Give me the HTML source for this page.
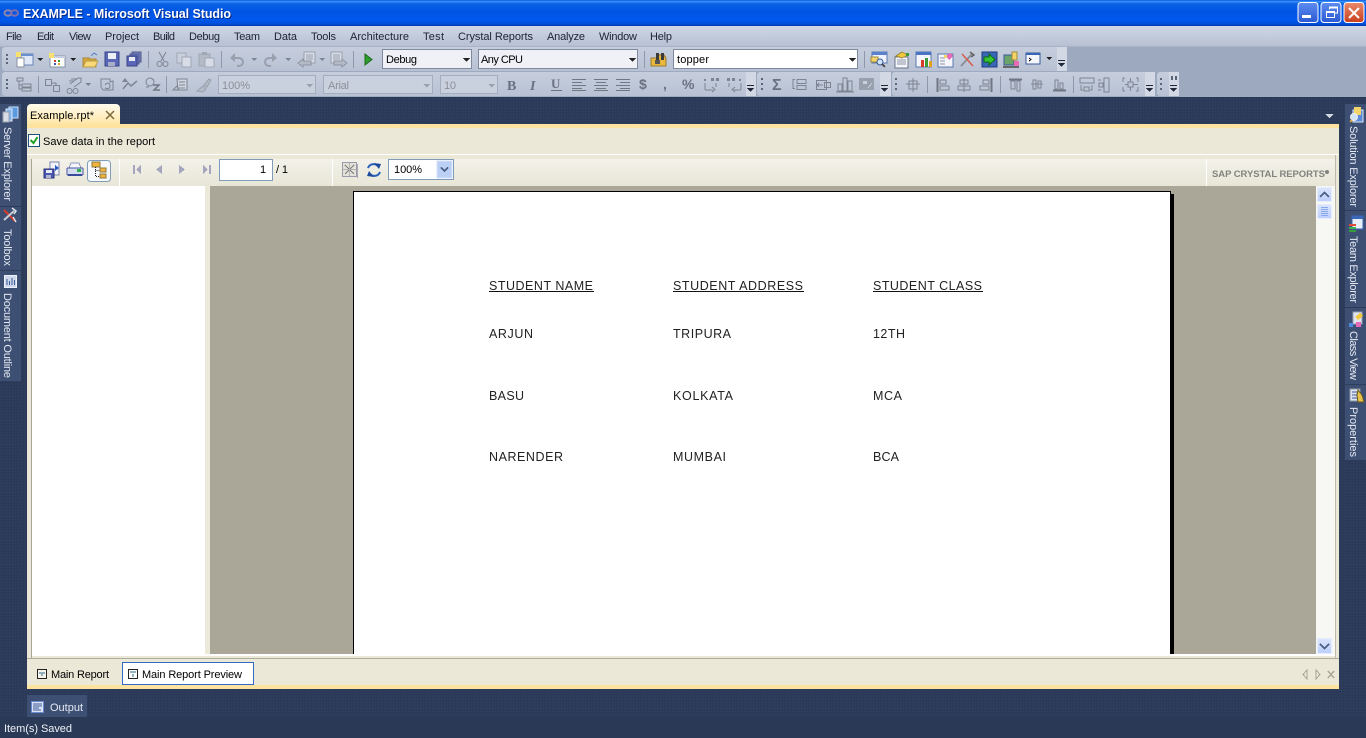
<!DOCTYPE html>
<html lang="en"><head><meta charset="utf-8"><title>EXAMPLE - Microsoft Visual Studio</title>
<style>
html,body{margin:0;padding:0;background:#2a3a56;overflow:hidden;width:1366px;height:738px}
svg{display:block}
text{font-family:"Liberation Sans",sans-serif;font-size:11px;fill:#000}
.m{fill:#1c2333}
.r{font-size:12.5px;fill:#222}
.s{fill:#e6eaf2}
.g{fill:#8b8f98}
.i{fill:none;stroke:#7d8592;stroke-width:1}
.f{fill:#7d8592}
</style></head><body>
<svg width="1366" height="738" viewBox="0 0 1366 738" xmlns="http://www.w3.org/2000/svg" shape-rendering="crispEdges">
<defs>
<pattern id="dith" width="3" height="3" patternUnits="userSpaceOnUse"><rect width="3" height="3" fill="#2b3b59"/><rect x="0" y="0" width="1" height="1" fill="#31415f"/><rect x="2" y="1" width="1" height="1" fill="#283753"/></pattern>
<linearGradient id="tb" x1="0" y1="0" x2="0" y2="1">
<stop offset="0" stop-color="#0a5ad8"/><stop offset=".06" stop-color="#3a93ff"/><stop offset=".14" stop-color="#0c62e6"/><stop offset=".45" stop-color="#0054e3"/><stop offset=".75" stop-color="#0058ee"/><stop offset=".9" stop-color="#0050dc"/><stop offset="1" stop-color="#003cb4"/></linearGradient>
<linearGradient id="mn" x1="0" y1="0" x2="0" y2="1"><stop offset="0" stop-color="#cfd7e5"/><stop offset="1" stop-color="#b7c1d3"/></linearGradient>
<linearGradient id="tool" x1="0" y1="0" x2="0" y2="1"><stop offset="0" stop-color="#c6cedd"/><stop offset="1" stop-color="#b8c2d4"/></linearGradient>
<linearGradient id="tab" x1="0" y1="0" x2="0" y2="1"><stop offset="0" stop-color="#fffbee"/><stop offset="1" stop-color="#fee6a6"/></linearGradient>
<linearGradient id="vt" x1="0" y1="0" x2="0" y2="1"><stop offset="0" stop-color="#f3f2ea"/><stop offset="1" stop-color="#e8e6d7"/></linearGradient>
<linearGradient id="btn" x1="0" y1="0" x2="0" y2="1"><stop offset="0" stop-color="#5d8cf0"/><stop offset="1" stop-color="#2b59d4"/></linearGradient>
<linearGradient id="cls" x1="0" y1="0" x2="0" y2="1"><stop offset="0" stop-color="#e98a6c"/><stop offset="1" stop-color="#c93f1c"/></linearGradient>
<linearGradient id="sb" x1="0" y1="0" x2="0" y2="1"><stop offset="0" stop-color="#dbe5fd"/><stop offset="1" stop-color="#bccffb"/></linearGradient>
</defs>

<!-- base -->
<rect width="1366" height="738" fill="#2a3a56"/>
<rect y="97" width="1366" height="620" fill="url(#dith)"/>

<!-- title bar -->
<rect width="1366" height="26" fill="url(#tb)"/>
<g fill="none" stroke="#8d86ad" stroke-width="2" shape-rendering="auto"><ellipse cx="8" cy="13" rx="3.5" ry="2.7"/><ellipse cx="14.5" cy="13" rx="3.5" ry="2.7" stroke="#7b6fb0"/></g>
<text x="24" y="19" textLength="208" style="font-size:12.5px;font-weight:bold;fill:#00288a">EXAMPLE - Microsoft Visual Studio</text>
<text x="23" y="18" textLength="208" style="font-size:12.5px;font-weight:bold;fill:#fff">EXAMPLE - Microsoft Visual Studio</text>
<g shape-rendering="auto">
<rect x="1298" y="2.5" width="20" height="20" rx="3" fill="url(#btn)" stroke="#fff"/>
<rect x="1321" y="2.5" width="20" height="20" rx="3" fill="url(#btn)" stroke="#fff"/>
<rect x="1344" y="2.5" width="20" height="20" rx="3" fill="url(#cls)" stroke="#fff"/>
<path d="M1349 8l10 10M1359 8l-10 10" stroke="#fff" stroke-width="2"/>
</g>
<rect x="1302" y="15" width="9" height="3" fill="#fff"/>
<g fill="none" stroke="#fff"><rect x="1326.5" y="11.5" width="8" height="6" stroke-width="1"/><path d="M1326.5 12.5h8M1329.5 9.5v-2.5h8v6h-2.5M1329.5 8h8"/></g>

<!-- menu -->
<rect y="26" width="1366" height="20" fill="url(#mn)"/>
<g class="m">
<text class="m" x="6" y="40" textLength="16">File</text>
<text class="m" x="37" y="40" textLength="17">Edit</text>
<text class="m" x="69" y="40" textLength="22">View</text>
<text class="m" x="105" y="40" textLength="34">Project</text>
<text class="m" x="153" y="40" textLength="22">Build</text>
<text class="m" x="189" y="40" textLength="31">Debug</text>
<text class="m" x="234" y="40" textLength="26">Team</text>
<text class="m" x="274" y="40" textLength="23">Data</text>
<text class="m" x="311" y="40" textLength="25">Tools</text>
<text class="m" x="350" y="40" textLength="59">Architecture</text>
<text class="m" x="423" y="40" textLength="21">Test</text>
<text class="m" x="458" y="40" textLength="75">Crystal Reports</text>
<text class="m" x="547" y="40" textLength="38">Analyze</text>
<text class="m" x="599" y="40" textLength="38">Window</text>
<text class="m" x="650" y="40" textLength="22">Help</text>
</g>

<!-- toolbar area -->
<rect y="46" width="1366" height="51" fill="#9ca9bf"/>
<rect y="46" width="1366" height="1" fill="#a8b3c6"/>
<g shape-rendering="auto">
<rect x="2" y="47" width="1065" height="24" rx="3" fill="url(#tool)"/>
<rect x="2" y="72" width="754" height="24" rx="3" fill="url(#tool)"/>
<rect x="757" y="72" width="134" height="24" rx="3" fill="url(#tool)"/>
<rect x="892" y="72" width="263" height="24" rx="3" fill="url(#tool)"/>
<rect x="1157" y="72" width="22" height="24" rx="3" fill="url(#tool)"/>
</g>
<!-- overflow chevrons -->
<g fill="#d2d9e5"><rect x="1057" y="47" width="10" height="24"/><rect x="746" y="72" width="10" height="24"/><rect x="880" y="72" width="11" height="24"/><rect x="1145" y="72" width="10" height="24"/><rect x="1169" y="72" width="10" height="24"/></g>
<g fill="#20283a">
<rect x="1058" y="60" width="7" height="1"/><path d="M1058 63h7l-3.500 4z"/>
<rect x="747" y="85" width="7" height="1"/><path d="M747 88h7l-3.500 4z"/>
<rect x="881" y="85" width="7" height="1"/><path d="M881 88h7l-3.500 4z"/>
<rect x="1146" y="85" width="7" height="1"/><path d="M1146 88h7l-3.500 4z"/>
<rect x="1170" y="85" width="7" height="1"/><path d="M1170 88h7l-3.500 4z"/>
<path d="M1171 76h2v4h-2zM1175 76h2v4h-2z" fill="#5a6478"/>
</g>
<!-- grips -->
<g fill="#5b6679">
<rect x="6" y="54" width="2" height="2"/><rect x="6" y="58" width="2" height="2"/><rect x="6" y="62" width="2" height="2"/>
<rect x="6" y="79" width="2" height="2"/><rect x="6" y="83" width="2" height="2"/><rect x="6" y="87" width="2" height="2"/>
<rect x="761" y="78" width="2" height="2"/><rect x="761" y="83" width="2" height="2"/><rect x="761" y="88" width="2" height="2"/>
<rect x="895" y="78" width="2" height="2"/><rect x="895" y="83" width="2" height="2"/><rect x="895" y="88" width="2" height="2"/>
<rect x="1160" y="78" width="2" height="2"/><rect x="1160" y="83" width="2" height="2"/><rect x="1160" y="88" width="2" height="2"/>
</g>
<!-- separators -->
<g fill="#8e98aa">
<rect x="148" y="51" width="1" height="17"/><rect x="221" y="51" width="1" height="17"/><rect x="353" y="51" width="1" height="17"/><rect x="644" y="51" width="1" height="17"/><rect x="864" y="51" width="1" height="17"/>
<rect x="38" y="76" width="1" height="17"/><rect x="166" y="76" width="1" height="17"/><rect x="927" y="76" width="1" height="17"/><rect x="1000" y="76" width="1" height="17"/><rect x="1073" y="76" width="1" height="17"/>
</g>

<!-- toolbar 1 icons -->
<g>
<!-- new project -->
<rect x="21" y="54" width="12" height="11" fill="#dfe8f6" stroke="#6a86b8"/><rect x="21" y="54" width="12" height="2" fill="#6a90d0"/><rect x="17" y="58" width="7" height="9" fill="#fff" stroke="#8a90a0"/><rect x="16" y="52" width="5" height="5" fill="#f8e070"/>
<path d="M37 58h6l-3 3z" fill="#222"/>
<!-- add item -->
<rect x="50" y="56" width="15" height="11" fill="#fff" stroke="#8a93a8"/><rect x="50" y="56" width="15" height="2" fill="#c7d0e0"/><rect x="54" y="60" width="2" height="2" fill="#d83a2a"/><rect x="58" y="60" width="2" height="2" fill="#3a9a3a"/><rect x="54" y="63" width="2" height="2" fill="#3a5ac8"/><rect x="58" y="63" width="2" height="2" fill="#e0a020"/><rect x="49" y="53" width="5" height="5" fill="#f8e070"/>
<path d="M70 58h6l-3 3z" fill="#222"/>
<!-- open -->
<path d="M83 58h6l1 1h6v8H83z" fill="#d9a63c" stroke="#a88a3c"/><path d="M83 67l3-6h12l-3 6z" fill="#f7d978" stroke="#b89a44"/><path d="M91 56l3-3 3 2" fill="none" stroke="#5d86c8"/>
<!-- save -->
<rect x="105" y="52" width="14" height="14" fill="#5a66b8" stroke="#3a4488"/><rect x="108" y="53" width="8" height="6" fill="#eef0f8"/><rect x="108" y="62" width="7" height="4" fill="#a8aec8"/>
<!-- save all -->
<rect x="132" y="52" width="9" height="10" fill="#7a88c8" stroke="#50588a"/><rect x="130" y="54" width="9" height="10" fill="#6a78c0" stroke="#50588a"/><rect x="127" y="56" width="10" height="10" fill="#5a66b8" stroke="#3a4488"/><rect x="129" y="57" width="6" height="4" fill="#e8eaf4"/>
<!-- cut, copy, paste (disabled) -->
<g shape-rendering="auto"><path class="i" d="M159 52l5 9M166 52l-5 9"/><circle class="i" cx="159.500" cy="64" r="2.500"/><circle class="i" cx="165.500" cy="64" r="2.500"/></g>
<rect x="177" y="53" width="9" height="10" fill="#c9d0dc" stroke="#a0a8b6"/><rect x="182" y="57" width="9" height="10" fill="#d7dce6" stroke="#a0a8b6"/>
<rect x="199" y="54" width="11" height="12" fill="#b4bac6" stroke="#a0a8b6"/><rect x="202" y="52" width="5" height="3" fill="#a0a8b6"/><rect x="205" y="58" width="9" height="9" fill="#d7dce6" stroke="#a0a8b6"/>
<!-- undo/redo -->
<g shape-rendering="auto"><path d="M231 58h8a4 4 0 0 1 0 8h-2" fill="none" stroke="#98a0ae" stroke-width="2"/><path d="M235 53v9l-5-4z" fill="#98a0ae"/>
<path d="M276 58h-7a4 4 0 0 0 0 8h2" fill="none" stroke="#98a0ae" stroke-width="2"/><path d="M272 53v9l5-4z" fill="#98a0ae"/></g>
<path d="M251 58h6l-3 3z M285 58h6l-3 3z M319 58h6l-3 3z" fill="#7d8592"/>
<!-- nav -->
<rect x="304" y="52" width="11" height="11" fill="#d7dce6" stroke="#98a0ae"/><path d="M306 55h7M306 57h7M306 59h7" stroke="#98a0ae"/><path d="M298 63l5-4v2h8v4h-8v2z" fill="#b4bbc7" stroke="#8d95a2"/>
<rect x="331" y="52" width="11" height="11" fill="#d7dce6" stroke="#98a0ae"/><path d="M333 55h7M333 57h7M333 59h7" stroke="#98a0ae"/><path d="M347 63l-5-4v2h-8v4h8v2z" fill="#b4bbc7" stroke="#8d95a2"/>
<!-- play -->
<path d="M365 54l7 5.500-7 5.500z" fill="#2e9e2e" stroke="#1a6a1a" shape-rendering="auto"/>
</g>
<!-- combos -->
<rect x="382.500" y="49.500" width="89" height="19" fill="#eff1f6" stroke="#7f8a9e"/>
<rect x="478.500" y="49.500" width="159" height="19" fill="#eff1f6" stroke="#7f8a9e"/>
<rect x="673.500" y="49.500" width="184" height="19" fill="#fff" stroke="#7f8a9e"/>
<text x="386" y="63" textLength="31">Debug</text>
<text x="481" y="63" textLength="42">Any CPU</text>
<text x="677" y="63" textLength="32">topper</text>
<path d="M463 58h7l-3.500 4zM629 58h7l-3.500 4zM849 58h7l-3.500 4z" fill="#222"/>
<!-- find in files -->
<path d="M651 58h6l1-3h6l2 3v8h-15z" fill="#e8b83c" stroke="#9a7a30"/><rect x="656" y="53" width="3" height="7" fill="#3a3a3a"/><rect x="661" y="53" width="3" height="7" fill="#3a3a3a"/><rect x="655" y="60" width="5" height="4" fill="#555"/>
<!-- right icons -->
<g>
<rect x="872" y="52" width="15" height="11" fill="#eef2fa" stroke="#5a78b0"/><rect x="872" y="52" width="15" height="3" fill="#5a82cc"/><rect x="871" y="57" width="7" height="5" fill="#f2d468" stroke="#a08a3c"/><circle cx="880" cy="62" r="3" fill="#cfe4f8" stroke="#3a5a98" shape-rendering="auto"/><path d="M882 64l3 3" stroke="#444" stroke-width="2"/>
<rect x="895" y="57" width="13" height="11" fill="#f4f6fb" stroke="#6a7488"/><path d="M897 60h9M897 62h9M897 64h9" stroke="#8a93a5"/><path d="M896 56l6-4 6 3-6 3z" fill="#f2c83c" stroke="#a08a3c"/><rect x="906" y="53" width="3" height="3" fill="#3a9a3a"/>
<rect x="916" y="52" width="15" height="15" fill="#f4f6fb" stroke="#5a78b0"/><rect x="916" y="52" width="15" height="3" fill="#4a74c4"/><rect x="921" y="60" width="3" height="7" fill="#d83a2a"/><rect x="925" y="58" width="3" height="9" fill="#3a9a3a"/><rect x="929" y="61" width="3" height="6" fill="#e0a020"/>
<rect x="938" y="54" width="15" height="13" fill="#f4f6fb" stroke="#5a78b0"/><path d="M940 58h5M940 61h5M940 64h5" stroke="#8a93a5"/><path d="M946 56l4-3 3 3-4 4z" fill="#e86ab8"/><rect x="944" y="55" width="3" height="3" fill="#f2d468"/>
<g shape-rendering="auto"><path d="M961 66l11-12" stroke="#8a8f98" stroke-width="2"/><path d="M962 54l11 12" stroke="#d85a4a" stroke-width="1.500"/><path d="M970 52l4 3-3 2" fill="none" stroke="#666" stroke-width="1.500"/></g>
<rect x="982" y="52" width="15" height="15" fill="#3a66b8" stroke="#1c3a80"/><path d="M984 57h5v-3l6 5.500-6 5.500v-3h-5z" fill="#35c435" stroke="#0a6a0a"/>
<rect x="1004" y="55" width="10" height="10" fill="#6aa46a" stroke="#3a5a98"/><rect x="1012" y="52" width="5" height="8" fill="#f2d468" stroke="#a08a3c"/><rect x="1014" y="61" width="5" height="5" fill="#e86ab8"/><rect x="1003" y="66" width="16" height="2" fill="#666"/>
<rect x="1026" y="53" width="14" height="11" fill="#f4f6fb" stroke="#3a5a98"/><rect x="1026" y="53" width="14" height="2" fill="#3a66b8"/><path d="M1029 58l2 1.500-2 1.500" fill="none" stroke="#111"/>
<path d="M1046 57h6l-3 3z" fill="#222"/>
</g>

<!-- toolbar 2 icons -->
<g>
<path d="M17 78h6v3h-6zM22 84h9v3h-9zM22 88h9v3h-9zM19 81v8h3M19 85h3" class="i"/>
<rect x="45.500" y="79.500" width="6" height="6" class="i"/><rect x="53.500" y="85.500" width="6" height="6" class="i"/><path d="M52 83h4v2" class="i"/>
<g shape-rendering="auto">
<path class="i" d="M70 84l8-6h3v4l-7 5"/><circle class="i" cx="69.500" cy="91" r="2.500"/><circle class="i" cx="75.500" cy="91" r="2.500"/><path d="M71 79h6M69 81h5" class="i"/>
<path d="M101 79h9v3l3-1v9h-10l-2-3z" class="i"/><path d="M105 85c2-3 5-2 5 1s-3 3-5 2" class="i"/>
<path d="M123 89l5-6 3 3 6-5" fill="none" stroke="#7d8592" stroke-width="1.500"/><path d="M125 78l3 4h-6z" class="f"/>
<circle class="i" cx="150" cy="82" r="4"/><path d="M146 87h3M151 78l3 2" class="i"/><path d="M153 85h6l-5 5h6" fill="none" stroke="#6f7784" stroke-width="1.500"/>
<path d="M177 79h10v11h-9z" fill="#d0d6e1" stroke="#7d8592"/><path d="M179 82h6M179 85h6M179 88h6M173 90l4-4 2 4z" class="i"/>
<path d="M197 91l6-5 3 3-3 3zM204 85l5-6 2 1-4 7z" fill="#b4bbc7" stroke="#98a0ae"/>
</g>
<path d="M85 83h6l-3 3z" class="f"/>
</g>
<!-- disabled combos -->
<rect x="218.500" y="75.500" width="97" height="18" fill="#c9d1df" stroke="#a4adbd"/>
<rect x="323.500" y="75.500" width="109" height="18" fill="#c9d1df" stroke="#a4adbd"/>
<rect x="440.500" y="75.500" width="57" height="18" fill="#c9d1df" stroke="#a4adbd"/>
<text class="g" x="222" y="89" textLength="28">100%</text>
<text class="g" x="328" y="89" textLength="21">Arial</text>
<text class="g" x="444" y="89" textLength="12">10</text>
<path d="M306 84h7l-3.500 3.500zM423 84h7l-3.500 3.500zM488 84h7l-3.500 3.500z" fill="#9aa2b0"/>
<!-- format icons -->
<text x="507" y="90" textLength="12" style="font-family:'Liberation Serif',serif;font-size:14px;font-weight:bold;fill:#6a7280">B</text>
<text x="530" y="90" textLength="9" style="font-family:'Liberation Serif',serif;font-size:14px;font-weight:bold;font-style:italic;fill:#6a7280">I</text>
<text x="551" y="88" textLength="10" style="font-family:'Liberation Serif',serif;font-size:13px;font-weight:bold;fill:#6a7280">U</text><rect x="551" y="90" width="11" height="1" fill="#6a7280"/>
<path d="M572 79.500h14M572 82.500h10M572 85.500h14M572 88.500h10M572 90.500h14M594 79.500h14M596 82.500h10M594 85.500h14M596 88.500h10M594 90.500h14M616 79.500h14M620 82.500h10M616 85.500h14M620 88.500h10M616 90.500h14" stroke="#6f7784" fill="none"/>
<text x="639" y="89" style="font-size:14px;font-weight:bold;fill:#6a7280">$</text>
<text x="663" y="89" style="font-size:14px;font-weight:bold;fill:#6a7280">,</text>
<text x="682" y="89" style="font-size:14px;font-weight:bold;fill:#6a7280">%</text>
<g fill="#7d8592"><rect x="704" y="79" width="2" height="2"/><rect x="711" y="78" width="3" height="3"/><rect x="716" y="78" width="3" height="3"/><rect x="727" y="78" width="3" height="3"/><rect x="732" y="78" width="3" height="3"/><rect x="739" y="79" width="2" height="2"/></g>
<g shape-rendering="auto"><path class="i" d="M705 83v6a1 1 0 0 0 1 1h7M712 87l3 2.500-3 2.500M716 83v4M741 83v6a1 1 0 0 1-1 1h-7M735 87l-3 2.500 3 2.500M729 83v4"/></g>
<!-- group 2 -->
<text x="772" y="90" textLength="13" style="font-size:16px;font-weight:bold;fill:#6a7280">Σ</text>
<path d="M795 79.500h-2v9h2M797 79.500h9v4h-9zM797 85.500h9v4h-9z" class="i"/>
<rect x="816.500" y="80.500" width="10" height="9" class="i"/><rect x="824.500" y="82.500" width="6" height="5" class="i"/><path d="M818 85h5M819 83l-2 2 2 2" class="i"/>
<path d="M838 91v-7h4v7zM843 91V78h4v13zM848 91V81h4v10zM836 92h18" class="i"/>
<rect x="859" y="78" width="15" height="12" fill="#98a0ae"/><rect x="863" y="81" width="4" height="3" fill="#c9d1df"/><path d="M868 88l4-5" stroke="#c9d1df"/>
<!-- group 3 -->
<path d="M906 84h14M913 78v14M909 81h8v8h-8z" class="i"/>
<path d="M937.500 78v14" stroke="#6f7784" stroke-width="2" fill="none"/><path d="M940 80h6v4h-6zM940 86h9v4h-9z" class="i"/>
<path d="M964 78v14M960 80h8v4h-8zM958 86h12v4h-12z" class="i"/>
<path d="M991.500 78v14" stroke="#6f7784" stroke-width="2" fill="none"/><path d="M983 80h6v4h-6zM980 86h9v4h-9z" class="i"/>
<path d="M1009 79.500h13" stroke="#6f7784" stroke-width="2" fill="none"/><path d="M1011 81h4v8h-4zM1017 81h3v10h-3z" class="i"/>
<path d="M1031 84h12M1033 80h3v9h-3zM1038 81h3v7h-3z" class="i"/>
<path d="M1053 90.500h13" stroke="#6f7784" stroke-width="2" fill="none"/><path d="M1055 80h3v9h-3zM1060 83h3v6h-3z" class="i"/>
<path d="M1080 78h14v5h-14zM1081 85v5h2M1092 85v5h-2M1084 87h5v4h-5z" class="i"/>
<path d="M1104 78h5v14h-5zM1098 80h3M1098 90h3M1099 83h4v4h-4z" class="i"/>
<path d="M1125 78h-2v4M1136 78h2v4M1125 91h-2v-4M1136 91h2v-4M1128 82h5v5h-5zM1125 84.500h3M1133 84.500h5M1130.500 78v4M1130.500 87v4" class="i"/>

<!-- sidebars -->
<g fill="#3d4f73">
<rect x="0" y="104" width="21" height="102"/><rect x="0" y="207" width="21" height="63"/><rect x="0" y="271" width="21" height="110"/>
<rect x="1345" y="104" width="21" height="106"/><rect x="1345" y="211" width="21" height="96"/><rect x="1345" y="308" width="21" height="76"/><rect x="1345" y="385" width="21" height="75"/>
</g>
<g class="s">
<text class="s" transform="translate(4,127) rotate(90)" textLength="74">Server Explorer</text>
<text class="s" transform="translate(4,229) rotate(90)" textLength="37">Toolbox</text>
<text class="s" transform="translate(4,293) rotate(90)" textLength="85">Document Outline</text>
<text class="s" transform="translate(1350,126) rotate(90)" textLength="81">Solution Explorer</text>
<text class="s" transform="translate(1350,236) rotate(90)" textLength="67">Team Explorer</text>
<text class="s" transform="translate(1350,331) rotate(90)" textLength="49">Class View</text>
<text class="s" transform="translate(1350,407) rotate(90)" textLength="50">Properties</text>
</g>
<!-- side icons -->
<rect x="9" y="107" width="9" height="11" fill="#5a9ae0" stroke="#cfe0f8"/><rect x="6" y="109" width="6" height="12" fill="#7fb4ec" stroke="#dfe8f8"/><rect x="3" y="112" width="6" height="10" fill="#d8dce4" stroke="#98a0b0"/>
<g shape-rendering="auto"><path d="M4 210l11 11" stroke="#d83a2a" stroke-width="2"/><path d="M4 220l10-9" stroke="#c8ccd4" stroke-width="2"/><path d="M12 208l4 3-2 3M13 217l3 5" stroke="#e0e4ea" stroke-width="1.500" fill="none"/></g>
<rect x="4.500" y="275.500" width="12" height="12" fill="#cfd8ea" stroke="#eef2fa"/><path d="M7 279v6M9.500 281v4M12 278v7M14.500 280v5" stroke="#3a5a98"/>
<rect x="1353" y="110" width="10" height="12" fill="#5a8ad8" stroke="#dfe8f8"/><rect x="1354" y="107" width="7" height="8" fill="#f2d468"/><circle cx="1354" cy="117" r="3.500" fill="#cfe4f8" stroke="#eee" shape-rendering="auto"/><path d="M1350 122l2-2" stroke="#e0b040" stroke-width="2"/>
<rect x="1352" y="216" width="11" height="13" fill="#e8eef8" stroke="#3a66b8"/><rect x="1352" y="216" width="11" height="3" fill="#3a66b8"/><rect x="1349" y="224" width="7" height="2" fill="#e04a3a"/><rect x="1349" y="227" width="7" height="2" fill="#3ab04a"/><rect x="1349" y="230" width="7" height="2" fill="#3a9a3a"/>
<rect x="1353" y="312" width="9" height="12" fill="#dfe4ee" stroke="#98a0b0"/><path d="M1355 317l5-4 3 3-5 4z" fill="#f2c83c"/><rect x="1349" y="323" width="4" height="4" fill="#4a8ae0"/><rect x="1356" y="322" width="5" height="5" fill="#e86ab8"/>
<rect x="1350" y="389" width="10" height="12" fill="#dfe4ee" stroke="#8a93a5"/><path d="M1352 392h6M1352 395h6M1352 398h6" stroke="#3a5a98"/><path d="M1358 390l4 5 2 7h-6l-1-7z" fill="#e8c04c" stroke="#6a5a20"/>

<!-- doc tab dropdown arrow -->
<path d="M1325 114h9l-4.500 4z" fill="#d2d7e1"/>

<!-- document -->
<g shape-rendering="auto"><path d="M27 124v-16a4 4 0 0 1 4-4h85a4 4 0 0 1 4 4v16z" fill="url(#tab)"/></g>
<text x="30" y="119" textLength="64">Example.rpt*</text>
<path d="M106 111l8 8M114 111l-8 8" stroke="#7c6a3c" stroke-width="1.500" shape-rendering="auto"/>
<rect x="27" y="124" width="1312" height="4" fill="#fee2a0"/>
<rect x="27" y="128" width="1312" height="561" fill="#ebe8d8"/>
<rect x="27" y="154" width="1312" height="1" fill="#fff"/>
<!-- save row -->
<rect x="28.500" y="134.500" width="11" height="12" fill="#fff" stroke="#1c5180"/>
<path d="M30.500 140l3 3 4-6" fill="none" stroke="#21a121" stroke-width="2" shape-rendering="auto"/>
<text x="43" y="145" textLength="112">Save data in the report</text>
<!-- viewer -->
<rect x="31" y="159" width="1304" height="27" fill="url(#vt)"/>
<rect x="31" y="159" width="1" height="499" fill="#a8a698"/>
<rect x="119" y="159" width="1" height="27" fill="#fff"/>
<rect x="332" y="159" width="1" height="27" fill="#fff"/>
<rect x="1206" y="159" width="1" height="27" fill="#fff"/>
<rect x="1335" y="155" width="1" height="503" fill="#bdbaaa"/>
<rect x="32" y="186" width="173" height="468" fill="#fff"/>
<rect x="205" y="186" width="5" height="468" fill="#ebe9da"/>
<rect x="210" y="186" width="1106" height="468" fill="#aaa798"/>
<rect x="1316" y="186" width="19" height="468" fill="#f7f7f3"/>
<!-- page -->
<rect x="353.500" y="191.500" width="817" height="470" fill="#fff" stroke="#000"/>
<rect x="1171" y="194" width="3" height="460" fill="#000"/>
<rect x="27" y="654" width="1312" height="35" fill="#ebe8d8"/>
<rect x="31" y="654" width="1" height="4" fill="#a8a698"/>
<rect x="32" y="654" width="1303" height="2" fill="#fff"/>
<rect x="1335" y="654" width="1" height="4" fill="#bdbaaa"/>
<rect x="27" y="658" width="1312" height="1" fill="#b0ad9e"/>
<rect x="27" y="685" width="1312" height="4" fill="#fee2a0"/>
<!-- report text -->
<text class="r" x="489" y="290" textLength="104">STUDENT NAME</text><rect x="489" y="291" width="105" height="1" fill="#111"/>
<text class="r" x="673" y="290" textLength="130">STUDENT ADDRESS</text><rect x="673" y="291" width="131" height="1" fill="#111"/>
<text class="r" x="873" y="290" textLength="109">STUDENT CLASS</text><rect x="873" y="291" width="110" height="1" fill="#111"/>
<text class="r" x="489" y="338" textLength="44">ARJUN</text>
<text class="r" x="673" y="338" textLength="58">TRIPURA</text>
<text class="r" x="873" y="338" textLength="32">12TH</text>
<text class="r" x="489" y="400" textLength="35">BASU</text>
<text class="r" x="673" y="400" textLength="60">KOLKATA</text>
<text class="r" x="873" y="400" textLength="29">MCA</text>
<text class="r" x="489" y="461" textLength="74">NARENDER</text>
<text class="r" x="673" y="461" textLength="53">MUMBAI</text>
<text class="r" x="873" y="461" textLength="26">BCA</text>
<!-- viewer icons -->
<rect x="50" y="162" width="9" height="13" fill="#f2f4fa" stroke="#7a84a8"/><path d="M55 165l4 3-4 3z" fill="#2a5ac8"/>
<rect x="44" y="169" width="10" height="9" fill="#4a56b0" stroke="#2c3480"/><rect x="46" y="170" width="6" height="3" fill="#e8eaf4"/><rect x="46" y="175" width="5" height="3" fill="#b0b6d0"/>
<path d="M71 163h8l2 5H69z" fill="#f4f6fb" stroke="#8a94b8"/><rect x="67" y="168" width="16" height="7" rx="1" fill="#d4dcf0" stroke="#4a58a0"/><rect x="68" y="174" width="14" height="2" fill="#3a4a9c"/><rect x="77" y="169" width="4" height="3" fill="#2fb04a"/>
<g shape-rendering="auto"><rect x="87.500" y="160.500" width="23" height="21" rx="3" fill="#f6f8fb" stroke="#7f9db9"/></g>
<rect x="92" y="162" width="8" height="5" fill="#f2b23c" stroke="#8a7a40"/><rect x="100" y="168" width="6" height="4" fill="#f2b23c" stroke="#8a7a40"/><rect x="100" y="174" width="6" height="4" fill="#f2b23c" stroke="#8a7a40"/><path d="M95.500 167v9.500h4.500M95.500 170.500h4.500" stroke="#222" stroke-dasharray="1 1" fill="none"/>
<g fill="#a5a6bd">
<path d="M133 165h2v9h-2zM141 165v9l-5-4.500z"/>
<path d="M162 165v9l-6-4.500z"/>
<path d="M179 165v9l6-4.500z"/>
<path d="M203 165v9l5-4.500zM209 165h2v9h-2z"/>
</g>
<rect x="219.500" y="159.500" width="53" height="21" fill="#fff" stroke="#7f9db9"/>
<text x="260" y="173" textLength="6">1</text>
<text x="276" y="173" textLength="12">/ 1</text>
<rect x="342.500" y="162.500" width="14" height="14" fill="#e4e2d8" stroke="#9a9aac"/><rect x="357" y="164" width="1" height="14" fill="#a8a8b4"/><path d="M345 165l9 9M354 165l-9 9" stroke="#7a7a7a"/><path d="M343 169.500h13M349.500 163v13" stroke="#b4b4b4"/>
<g shape-rendering="auto" fill="none" stroke="#2a62b8" stroke-width="2"><path d="M368 168a6 6 0 0 1 10-2"/><path d="M380 172a6 6 0 0 1-10 2"/></g>
<path d="M374 163l7 1-2 5zM374 177l-7-1 2-5z" fill="#1c4a9c" shape-rendering="auto"/>
<rect x="388.500" y="159.500" width="65" height="20" fill="#fff" stroke="#7f9db9"/>
<text x="394" y="173" textLength="28">100%</text>
<rect x="437" y="161" width="15" height="17" fill="#bcd0f6" stroke="#d4e0f8"/>
<path d="M441 167.500l3.500 3.500 3.500-3.500" fill="none" stroke="#4d6185" stroke-width="2"/>
<text x="1212" y="177" textLength="113" style="font-size:9.500px;font-weight:bold;fill:#83837e">SAP CRYSTAL REPORTS</text>
<circle cx="1327" cy="172" r="2" fill="#83837e" shape-rendering="auto"/>
<!-- scrollbar -->
<rect x="1317.500" y="187.500" width="14" height="14" rx="1" fill="url(#sb)" stroke="#e6edfd"/>
<path d="M1320 197l4.500-4.500 4.500 4.500" fill="none" stroke="#4d6185" stroke-width="2"/>
<rect x="1317.500" y="204.500" width="14" height="14" rx="1" fill="url(#sb)" stroke="#e6edfd"/>
<path d="M1321 207.500h7M1321 209.500h7M1321 211.500h7M1321 213.500h7M1321 215.500h7" stroke="#8aa8ec"/>
<rect x="1317.500" y="638.500" width="14" height="15" rx="1" fill="url(#sb)" stroke="#e6edfd"/>
<path d="M1320 644l4.500 4.500 4.500-4.500" fill="none" stroke="#4d6185" stroke-width="2"/>
<!-- bottom tabs -->
<rect x="37.500" y="669.500" width="9" height="9" fill="#f6f4ea" stroke="#222"/><path d="M40 672v2M42 672v4M44 672v2" stroke="#2a6a8a"/>
<text x="51" y="678" textLength="58">Main Report</text>
<rect x="122.500" y="662.500" width="131" height="22" fill="#fff" stroke="#316ac5"/>
<rect x="128.500" y="669.500" width="9" height="9" fill="#fff" stroke="#222"/><path d="M130 672h6M133 674v3" stroke="#2a6a8a"/>
<text x="142" y="678" textLength="100">Main Report Preview</text>
<path d="M1307 670v9l-4-4.500zM1316 670v9l4-4.500z" fill="#ebe8d8" stroke="#a8a698"/>
<path d="M1328 671l6 7M1334 671l-6 7" stroke="#a8a698" stroke-width="1.500"/>
<!-- output -->
<rect x="27" y="695" width="60" height="22" rx="1" fill="#3d4f73"/>
<rect x="31.500" y="701.500" width="12" height="11" fill="#dbe3f4" stroke="#6a8ad0"/><path d="M33 704h9M33 706h9M33 708h6M33 710h8" stroke="#3a5a98"/>
<text class="s" x="50" y="711" textLength="33">Output</text>
<text x="4" y="732" textLength="68" style="fill:#eef1f6">Item(s) Saved</text>
</svg>
</body></html>
